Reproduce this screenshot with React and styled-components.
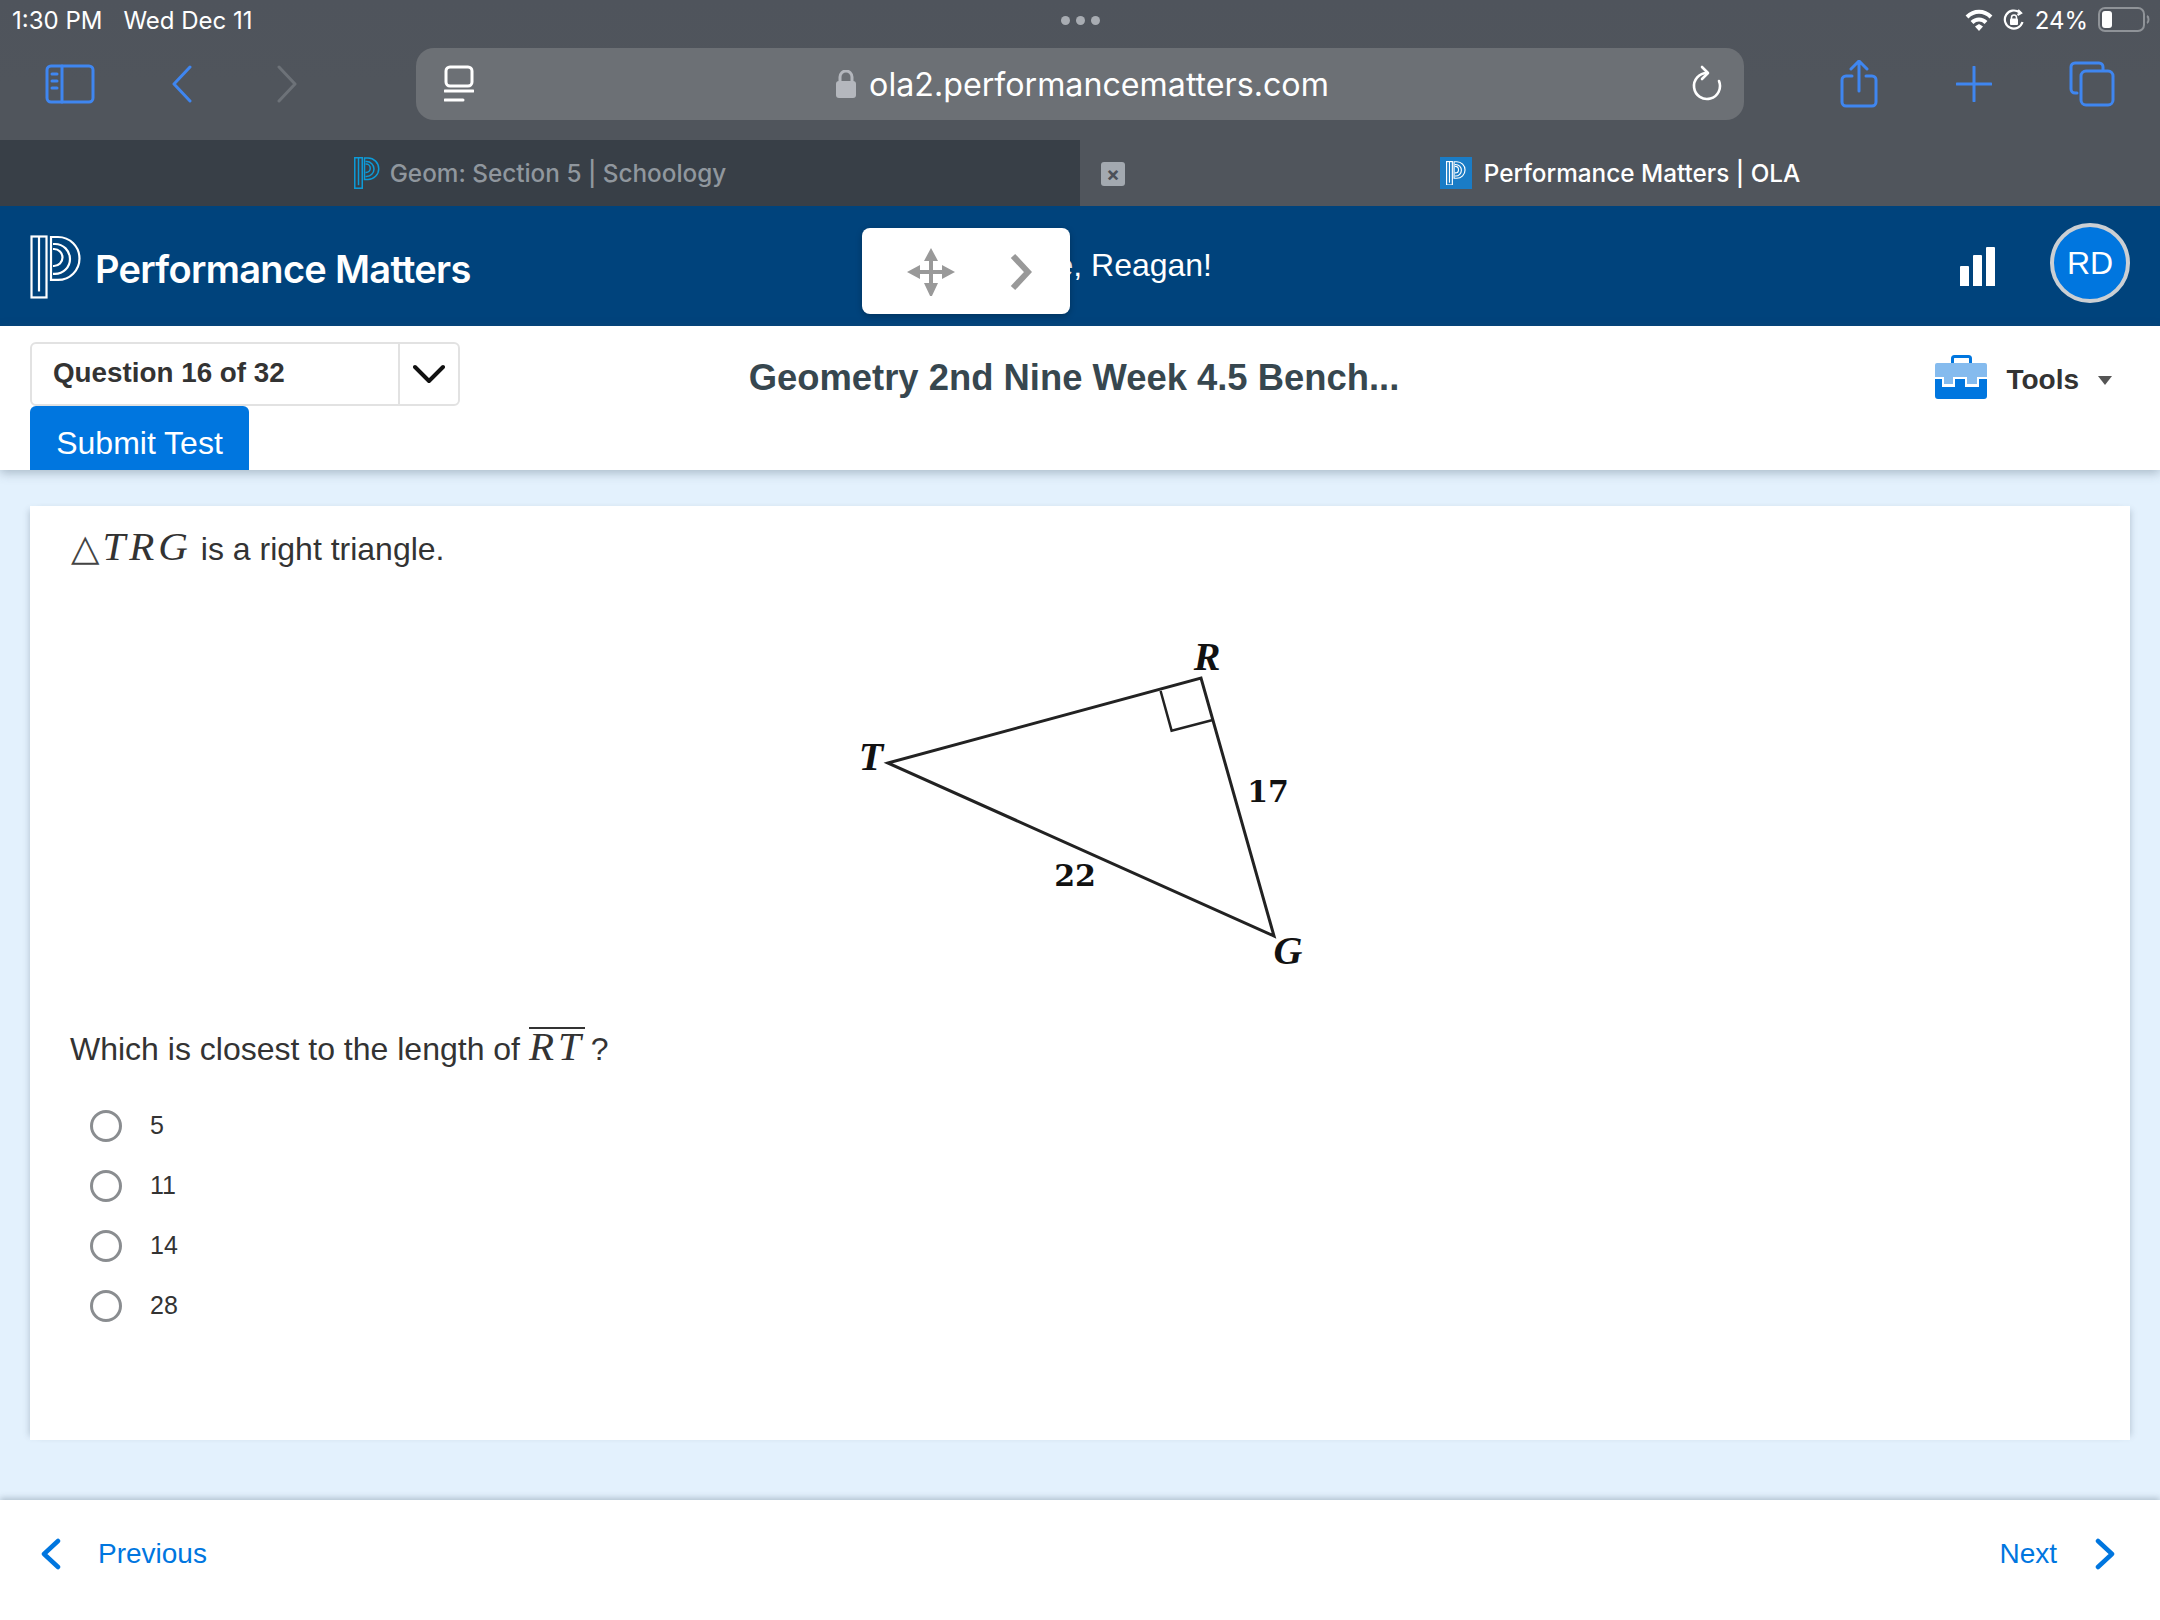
import React from 'react';
import styled, { createGlobalStyle } from 'styled-components';

const GlobalStyle = createGlobalStyle`
  html, body {
    margin: 0;
    padding: 0;
    background: #e3f1fd;
  }
  * {
    box-sizing: border-box;
  }
`;

const sans = '"Liberation Sans", Arial, sans-serif';
const ui = 'Inter, "Noto Sans", sans-serif';
const math = '"Liberation Serif", "Times New Roman", serif';
const safariBlue = '#3f86f0';
const appBlue = '#0076df';

const PMark = ({ size = 52, color = '#fff', stroke = 2.2 }) => (
  <svg width={size} height={size * 1.23} viewBox="0 0 52 64" fill="none" stroke={color} strokeWidth={stroke}>
    <rect x="1.500" y="1.500" width="15" height="61" />
    <path d="M9 1.500v55" />
    <path d="M21 2h7a21.500 21.500 0 0 1 0 43h-7z" />
    <path d="M23 9h2a15 15 0 0 1 0 30h-2" />
    <path d="M23 14h1a8.500 8.500 0 0 1 0 17h-1" />
  </svg>
);

const ToolboxIcon = () => (
  <svg width="52" height="44" viewBox="0 0 52 44">
    <rect x="17.500" y="1.500" width="18" height="9" rx="2" fill="none" stroke={appBlue} strokeWidth="3" />
    <path d="M2 8h48a2 2 0 0 1 2 2v12H42v7H32v-7H18v7H9v-7H0V10a2 2 0 0 1 2-2z" fill="#85bbee" />
    <path d="M0 24h7v8h13v-8h10v8h14v-8h8v17a3 3 0 0 1-3 3H3a3 3 0 0 1-3-3z" fill={appBlue} />
  </svg>
);

const MoveIcon = () => (
  <svg width="48" height="48" viewBox="0 0 48 48" fill="#999">
    <path d="M24 0l7 13h-5v9h9v-5l13 7-13 7v-5h-9v9h5l-7 15-7-15h5v-9h-9v5L0 24l13-7v5h9v-9h-5z" />
  </svg>
);

const Page = styled.div`
  display: flex;
  flex-direction: column;
  width: 2160px;
  height: 1620px;
  overflow: hidden;
  background: #e3f1fd;
  font-family: ${sans};
  position: relative;
`;

const Chrome = styled.div`
  height: 140px;
  background: linear-gradient(#4f545c, #50555c 60%, #50555c);
  color: #fff;
  font-family: ${ui};
`;

const StatusBar = styled.div`
  display: grid;
  grid-template-columns: 1fr auto 1fr;
  align-items: center;
  height: 40px;
  padding: 0 12px;
  font-size: 24px;
`;

const StatusLeft = styled.div`
  display: flex;
  gap: 21px;
`;

const Dots = styled.div`
  display: flex;
  gap: 6px;
`;

const Dot = styled.span`
  width: 9px;
  height: 9px;
  border-radius: 50%;
  background: #a8acb2;
`;

const StatusRight = styled.div`
  display: flex;
  justify-content: flex-end;
  align-items: center;
  gap: 10px;
  margin-right: -2px;
`;

const Toolbar = styled.div`
  display: flex;
  align-items: center;
  height: 72px;
  margin-top: 8px;
  padding-left: 45px;
`;

const ToolIcon = styled.svg`
  flex: none;
  margin-left: ${p => p.$gap || 0}px;
  fill: none;
  stroke: ${p => p.$color || safariBlue};
  stroke-width: ${p => p.$weight || 3}px;
  stroke-linecap: round;
  stroke-linejoin: round;
`;

const AddressBar = styled.div`
  flex: none;
  display: flex;
  align-items: center;
  width: 1328px;
  height: 72px;
  margin-left: 119px;
  padding: 0 21px 0 28px;
  border-radius: 18px;
  background: #6c7075;
`;

const Url = styled.div`
  flex: 1;
  display: flex;
  justify-content: center;
  align-items: center;
  gap: 13px;
  font-size: 32.200px;
`;

const TabRow = styled.div`
  display: grid;
  grid-template-columns: 1080px 1fr;
  height: 66px;
  font-family: ${ui};
  font-size: 24.300px;
  font-weight: 500;
`;

const Tab = styled.div`
  display: flex;
  align-items: center;
  justify-content: center;
  gap: ${p => (p.$active ? 12 : 10)}px;
  position: relative;
  background: ${p => (p.$active ? '#50555c' : '#383f47')};
  color: ${p => (p.$active ? '#fff' : '#90979e')};
`;

const CloseBox = styled.span`
  position: absolute;
  left: 21px;
  top: 22px;
  display: flex;
  align-items: center;
  justify-content: center;
  width: 24px;
  height: 24px;
  border-radius: 3px;
  background: #a3a9b0;
  color: #4b5058;
  font-size: 20px;
  font-weight: 700;
`;

const Favicon = styled.span`
  display: flex;
  align-items: center;
  justify-content: center;
  width: 32px;
  height: 32px;
  background: #1a7cc6;
`;

const Header = styled.header`
  display: flex;
  align-items: center;
  height: 120px;
  padding: 0 30px;
  background: #00437c;
  color: #fff;
  position: relative;
`;

const LogoMark = styled.div`
  display: flex;
  margin-top: 2px;
`;

const Brand = styled.div`
  margin-left: 13px;
  padding-top: 6px;
  font-family: ${ui};
  font-size: 38px;
  font-weight: 600;
  letter-spacing: -0.700px;
`;

const Greeting = styled.div`
  margin-left: auto;
  padding-bottom: 2px;
  font-size: 32px;
`;

const Bars = styled.div`
  display: flex;
  align-items: flex-end;
  gap: 4px;
  height: 39px;
  margin-left: 748px;
`;

const Bar = styled.span`
  width: 9px;
  height: ${p => p.$h}px;
  border-radius: 1px 1px 0 0;
  background: #fff;
`;

const Avatar = styled.div`
  display: flex;
  align-items: center;
  justify-content: center;
  width: 80px;
  height: 80px;
  margin: -6px 0 0 55px;
  border: 4px solid #cbcfd3;
  border-radius: 50%;
  background: ${appBlue};
  font-size: 32px;
`;

const FloatingPad = styled.div`
  position: absolute;
  left: 862px;
  top: 22px;
  display: flex;
  align-items: center;
  width: 208px;
  height: 86px;
  padding: 2px 0 0 45px;
  gap: 55px;
  border-radius: 8px;
  background: #fff;
  box-shadow: 0 2px 6px rgba(0, 0, 0, 0.25);
`;

const TestBar = styled.div`
  display: grid;
  grid-template-columns: 1fr auto 1fr;
  height: 144px;
  padding: 16px 48px 0 30px;
  background: #fff;
  box-shadow: 0 3px 10px rgba(60, 80, 100, 0.35);
  position: relative;
`;

const TestControls = styled.div`
  display: flex;
  flex-direction: column;
  align-items: flex-start;
`;

const QuestionSelect = styled.div`
  display: flex;
  width: 430px;
  height: 64px;
  border: 2px solid #e2e2e2;
  border-radius: 6px;
`;

const SelectLabel = styled.div`
  flex: 1;
  padding: 13px 0 0 21px;
  color: #333;
  font-size: 27.800px;
  font-weight: 700;
`;

const SelectArrow = styled.div`
  display: flex;
  align-items: center;
  justify-content: center;
  width: 60px;
  border-left: 2px solid #e2e2e2;
`;

const SubmitButton = styled.button`
  width: 219px;
  height: 64px;
  padding: 10px 0 0;
  border: 0;
  border-radius: 6px 6px 0 0;
  background: ${appBlue};
  color: #fff;
  font-family: ${sans};
  font-size: 32px;
`;

const TestTitle = styled.h1`
  margin: 15px 0 0 6px;
  color: #37474f;
  font-size: 36.400px;
  font-weight: 700;
`;

const ToolsMenu = styled.div`
  display: flex;
  justify-content: flex-end;
  align-items: flex-start;
  gap: 19px;
  padding-top: 13px;
  color: #333;
  font-size: 28px;
  font-weight: 700;
`;

const ToolsLabel = styled.span`
  padding-top: 9px;
`;

const Caret = styled.span`
  margin-top: 21px;
  width: 0;
  height: 0;
  border-left: 7px solid transparent;
  border-right: 7px solid transparent;
  border-top: 9px solid #555;
`;

const Content = styled.main`
  flex: 1;
  padding: 36px 30px 60px;
`;

const Card = styled.section`
  height: 934px;
  padding: 15px 40px 0;
  background: #fff;
  box-shadow: -5px 0 6px -4px rgba(60, 80, 100, 0.25), 5px 0 6px -4px rgba(60, 80, 100, 0.25);
  color: #333;
`;

const Stem = styled.p`
  margin: 0;
  font-size: 32px;
  line-height: 50px;
`;

const MathSymbol = styled.span`
  margin-left: 1px;
  font-family: "DejaVu Sans", sans-serif;
  font-size: 37px;
  font-weight: 400;
  color: #444;
`;

const MathText = styled.span`
  margin-left: 3px;
  font-family: ${math};
  font-size: 41px;
  font-style: italic;
  letter-spacing: 4px;
  color: #333;
`;

const Overlined = styled(MathText)`
  display: inline-block;
  margin: 0 -3px 0 0;
  line-height: 34px;
  border-top: 2px solid #333;
`;

const Figure = styled.div`
  display: flex;
  justify-content: center;
  margin-top: 38px;
  height: 380px;
`;

const Prompt = styled(Stem)`
  margin-top: 32px;
`;

const Options = styled.div`
  display: flex;
  flex-direction: column;
  gap: 29px;
  margin: 36px 0 0 20px;
`;

const Option = styled.label`
  display: flex;
  align-items: center;
  gap: 28px;
  height: 31px;
  font-size: 25px;
`;

const Radio = styled.span`
  width: 32px;
  height: 32px;
  border: 3px solid #8a8d90;
  border-radius: 50%;
`;

const Footer = styled.footer`
  display: flex;
  justify-content: space-between;
  align-items: center;
  height: 120px;
  padding: 0 45px 12px 41px;
  background: #fff;
  box-shadow: 0 -2px 6px rgba(60, 80, 100, 0.3);
  position: relative;
`;

const PagerLink = styled.a`
  display: flex;
  align-items: center;
  gap: ${p => (p.$next ? 38 : 37)}px;
  color: ${appBlue};
  font-size: 28px;
`;

const Chevron = ({ dir }) => (
  <svg width="20" height="32" viewBox="0 0 20 32" fill="none" stroke={appBlue} strokeWidth="4.500" strokeLinecap="round" strokeLinejoin="round">
    <path d={dir === 'left' ? 'M17 3L3 16l14 13' : 'M3 3l14 13L3 29'} />
  </svg>
);

const options = ['5', '11', '14', '28'];

const App = () => (
  <Page>
    <GlobalStyle />
    <Chrome>
      <StatusBar>
        <StatusLeft>
          <span>1:30 PM</span>
          <span>Wed Dec 11</span>
        </StatusLeft>
        <Dots>
          <Dot />
          <Dot />
          <Dot />
        </Dots>
        <StatusRight>
          <svg width="28" height="22" viewBox="0 0 28 22" fill="none" stroke="#fff" strokeWidth="4">
            <path d="M2 8c7-7 17-7 24 0M7 13.500c4-4 10-4 14 0" />
            <path d="M10 17.500l4-2.500 4 2.500-4 4.500z" fill="#fff" stroke="none" />
          </svg>
          <svg width="22" height="22" viewBox="0 0 22 22" fill="none" stroke="#fff" strokeWidth="2.200">
            <path d="M19.500 13a9 9 0 1 1-3-9.500" />
            <path d="M15 1l3 3-3.500 2" />
            <rect x="7" y="9.500" width="8" height="6.500" rx="1" fill="#fff" stroke="none" />
            <path d="M8.500 10V8.500a2.500 2.500 0 0 1 5 0V10" strokeWidth="1.500" />
          </svg>
          <span>24%</span>
          <svg width="52" height="26" viewBox="0 0 52 26" fill="none">
            <rect x="1" y="1" width="45" height="23" rx="6" stroke="#8f9398" strokeWidth="2" />
            <rect x="4" y="4" width="10" height="17" rx="3" fill="#fff" />
            <path d="M49 9c2 1 2 6 0 7" stroke="#8f9398" strokeWidth="2" />
          </svg>
        </StatusRight>
      </StatusBar>
      <Toolbar>
        <ToolIcon width="50" height="40" viewBox="0 0 50 40">
          <rect x="2" y="2" width="46" height="36" rx="4" />
          <path d="M17 2v36M7 10h5M7 17h5M7 24h5" />
        </ToolIcon>
        <ToolIcon $gap={77} width="20" height="38" viewBox="0 0 20 38">
          <path d="M18 2L2 19l16 17" />
        </ToolIcon>
        <ToolIcon $gap={85} $color="#6d7278" width="20" height="38" viewBox="0 0 20 38">
          <path d="M2 2l16 17L2 36" />
        </ToolIcon>
        <AddressBar>
          <ToolIcon $color="#fff" width="30" height="38" viewBox="0 0 30 38">
            <rect x="2" y="2" width="26" height="19" rx="4" />
            <path d="M1 26h28M1 35h18" />
          </ToolIcon>
          <Url>
            <svg width="20" height="28" viewBox="0 0 20 28" fill="#b4b7bd">
              <rect y="11" width="20" height="17" rx="3" />
              <path d="M4 12V7a6 6 0 0 1 12 0v5" fill="none" stroke="#b4b7bd" strokeWidth="3" />
            </svg>
            ola2.performancematters.com
          </Url>
          <ToolIcon $color="#fff" $weight={2.6} width="32" height="38" viewBox="0 0 32 38">
            <path d="M28 16A13 13 0 1 1 16 8" />
            <path d="M11 2l6 6-6 6" />
          </ToolIcon>
        </AddressBar>
        <ToolIcon $gap={96} width="38" height="48" viewBox="0 0 38 48">
          <path d="M12 16H6a4 4 0 0 0-4 4v22a4 4 0 0 0 4 4h26a4 4 0 0 0 4-4V20a4 4 0 0 0-4-4h-6" />
          <path d="M19 31V2M11 9l8-8 8 8" />
        </ToolIcon>
        <ToolIcon $gap={78} width="36" height="36" viewBox="0 0 36 36">
          <path d="M18 1v34M1 18h34" />
        </ToolIcon>
        <ToolIcon $gap={77} width="46" height="46" viewBox="0 0 46 46">
          <path d="M8 32H6a4 4 0 0 1-4-4V6a4 4 0 0 1 4-4h24a4 4 0 0 1 4 4v3" />
          <rect x="12" y="10" width="32" height="34" rx="5" />
        </ToolIcon>
      </Toolbar>
    </Chrome>
    <TabRow>
      <Tab>
        <PMark size={26} color="#0d9bd8" stroke={3} />
        <span>Geom: Section 5 | Schoology</span>
      </Tab>
      <Tab $active>
        <CloseBox>×</CloseBox>
        <Favicon>
          <PMark size={20} stroke={3} />
        </Favicon>
        <span>Performance Matters | OLA</span>
      </Tab>
    </TabRow>
    <Header>
      <LogoMark>
        <PMark />
      </LogoMark>
      <Brand>Performance Matters</Brand>
      <Greeting>Welcome, Reagan!</Greeting>
      <Bars>
        <Bar $h={20} />
        <Bar $h={31} />
        <Bar $h={39} />
      </Bars>
      <Avatar>RD</Avatar>
      <FloatingPad>
        <MoveIcon />
        <svg width="22" height="38" viewBox="0 0 22 38" fill="none" stroke="#999" strokeWidth="6">
          <path d="M3 3l15 16L3 35" />
        </svg>
      </FloatingPad>
    </Header>
    <TestBar>
      <TestControls>
        <QuestionSelect>
          <SelectLabel>Question 16 of 32</SelectLabel>
          <SelectArrow>
            <svg width="32" height="20" viewBox="0 0 32 20" fill="none" stroke="#111" strokeWidth="4" strokeLinecap="round" strokeLinejoin="round">
              <path d="M2 3l14 14L30 3" />
            </svg>
          </SelectArrow>
        </QuestionSelect>
        <SubmitButton>Submit Test</SubmitButton>
      </TestControls>
      <TestTitle>Geometry 2nd Nine Week 4.5 Bench...</TestTitle>
      <ToolsMenu>
        <ToolboxIcon />
        <ToolsLabel>Tools</ToolsLabel>
        <Caret />
      </ToolsMenu>
    </TestBar>
    <Content>
      <Card>
        <Stem>
          <MathSymbol>△</MathSymbol>
          <MathText>TRG</MathText> is a right triangle.
        </Stem>
        <Figure>
          <svg width="520" height="380" viewBox="820 610 520 380">
            <path d="M888 761L1201 676L1274 934Z" fill="none" stroke="#222" strokeWidth="3" strokeLinejoin="miter" />
            <path d="M1160.600 689L1171.600 728.700L1213.700 717.800" fill="none" stroke="#222" strokeWidth="2.500" />
            <g fontFamily={math} fontStyle="italic" fontWeight="700" fontSize="40" fill="#111" textAnchor="middle">
              <text x="1207" y="668">R</text>
              <text x="871" y="768">T</text>
              <text x="1288" y="962">G</text>
            </g>
            <g fontFamily='"DejaVu Serif", serif' fontWeight="700" fontSize="30" fill="#111" textAnchor="middle">
              <text x="1268" y="800">17</text>
              <text x="1075" y="884">22</text>
            </g>
          </svg>
        </Figure>
        <Prompt>
          Which is closest to the length of <Overlined>RT</Overlined> ?
        </Prompt>
        <Options>
          {options.map(option => (
            <Option key={option}>
              <Radio />
              {option}
            </Option>
          ))}
        </Options>
      </Card>
    </Content>
    <Footer>
      <PagerLink>
        <Chevron dir="left" />
        Previous
      </PagerLink>
      <PagerLink $next>
        Next
        <Chevron dir="right" />
      </PagerLink>
    </Footer>
  </Page>
);

export default App;
